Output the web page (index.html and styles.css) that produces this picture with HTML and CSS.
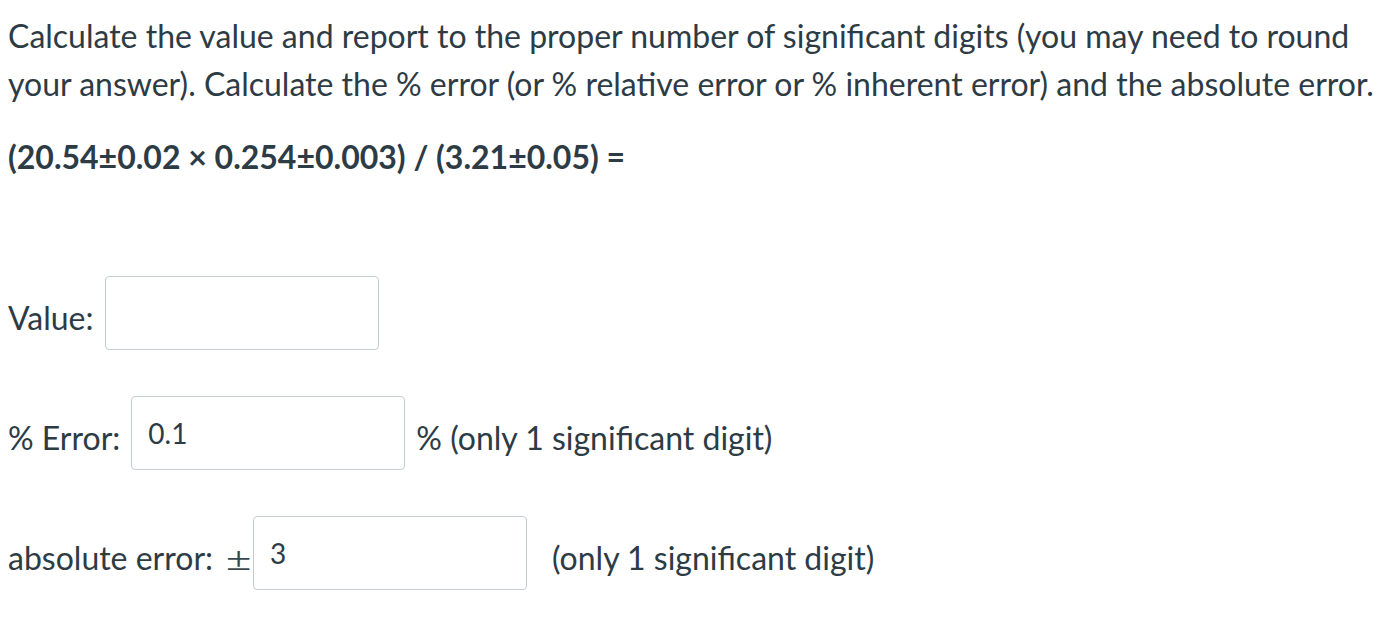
FILE: index.html
```html
<!DOCTYPE html>
<html lang="en">
<head>
<meta charset="utf-8">
<link rel="stylesheet" href="styles.css">
</head>
<body>
<div class="question">
  <p class="intro">Calculate the value and report to the proper number of significant digits (you may need to round your answer). Calculate the % error (or % relative error or % inherent error) and the absolute error.</p>
  <p class="equation">(20.54±0.02 × 0.254±0.003) / (3.21±0.05) =</p>
  <div class="row row-value">
    <span class="label">Value:</span>
    <input class="answer" type="text" value="">
  </div>
  <div class="row">
    <span class="label">% Error:</span>
    <input class="answer" type="text" value="0.1">
    <span class="label after">% (only 1 significant digit)</span>
  </div>
  <div class="row">
    <span class="label label-abs">absolute error:</span>
    <span class="pm">±</span>
    <input class="answer" type="text" value="3">
    <span class="label after wide">(only 1 significant digit)</span>
  </div>
</div>
</body>
</html>
```

FILE: styles.css
```css
html, body {
  margin: 0;
  padding: 0;
  background: #ffffff;
}

body {
  font-family: Lato, "Open Sans", sans-serif;
  color: #2d3b45;
}

.question {
  padding: 12px 8px 0 8px;
}

.intro {
  margin: 0;
  font-size: 32px;
  line-height: 48px;
}

.equation {
  margin: 25px 0 0 0;
  font-size: 32px;
  line-height: 48px;
  font-weight: 700;
}

.row {
  display: flex;
  align-items: flex-start;
  margin-top: 46px;
  height: 74px;
}

.row-value {
  margin-top: 95px;
}

.label {
  font-size: 32px;
  line-height: 48px;
  padding-top: 18px;
  margin-right: 11px;
  white-space: nowrap;
}

.label-abs {
  margin-right: 13px;
}

.label.after {
  margin-left: 11px;
  margin-right: 0;
}

.label.after.wide {
  margin-left: 25px;
}

.pm {
  display: inline-block;
  font-family: "Liberation Serif", serif;
  font-size: 40px;
  line-height: 48px;
  padding-top: 20px;
  margin-right: 2px;
  color: #3a4750;
  transform: scale(1.15, 0.85);
  transform-origin: left center;
  width: 25px;
}

.answer {
  box-sizing: border-box;
  width: 274px;
  height: 74px;
  margin: 0;
  padding: 0 16px;
  border: 1px solid #c7cdd1;
  border-radius: 4px;
  background: #ffffff;
  font-family: Lato, sans-serif;
  font-size: 28px;
  color: #2d3b45;
  outline: none;
}
```
